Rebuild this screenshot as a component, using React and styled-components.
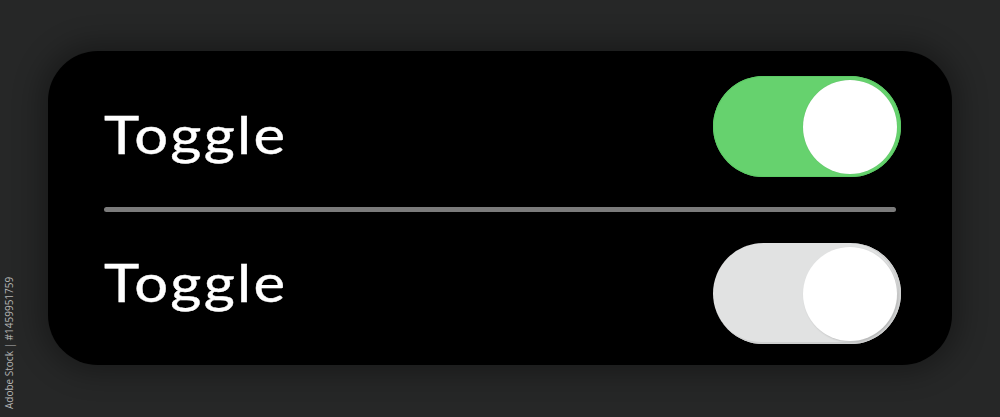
import React from "react";
import styled, { createGlobalStyle } from "styled-components";

const GlobalStyle = createGlobalStyle`
  html, body {
    margin: 0;
    padding: 0;
    background: #262727;
  }
  body {
    font-family: Lato, "Liberation Sans", sans-serif;
  }
`;

const Stage = styled.div`
  position: relative;
  width: 1000px;
  height: 417px;
  box-sizing: border-box;
  padding: 51px 48px 52px 48px;
  background: #262727;
  overflow: hidden;
`;

const Card = styled.section`
  height: 100%;
  box-sizing: border-box;
  padding: 0 51px 0 56px;
  background: #000;
  border-radius: 50px;
  box-shadow: 0 0 28px 8px rgba(0, 0, 0, 0.32);
  display: flex;
  flex-direction: column;
`;

const Row = styled.div`
  height: ${(p) => p.$height}px;
  display: flex;
  justify-content: space-between;
  align-items: flex-start;
`;

const Label = styled.span`
  margin-top: ${(p) => p.$top}px;
  font-family: Lato, "Liberation Sans", sans-serif;
  font-size: 52px;
  line-height: 52px;
  font-weight: 400;
  letter-spacing: 2px;
  color: #fff;
  transform: scaleX(1.15);
  transform-origin: left center;
  -webkit-text-stroke: 0.4px #fff;
`;

const Divider = styled.hr`
  margin: 0 5px 0 0;
  height: 5px;
  border: none;
  border-radius: 3px;
  background: #7b7b7b;
`;

const Track = styled.div`
  margin-top: ${(p) => p.$top}px;
  width: 188px;
  height: 101px;
  box-sizing: border-box;
  border-radius: 51px;
  padding-right: 4px;
  display: flex;
  align-items: center;
  justify-content: flex-end;
  background: ${(p) => (p.$on ? "#66d26e" : "#e1e2e2")};
  box-shadow: ${(p) =>
    p.$on
      ? "inset 0 0 0 1px #5ccb65"
      : "inset -2px -1px 0 1px #cfd0d0"};
`;

const Knob = styled.div`
  width: 94px;
  height: 94px;
  border-radius: 50%;
  background: #fff;
  box-shadow: ${(p) =>
    p.$on ? "0 0 1px rgba(0,0,0,0.15)" : "1px 1px 2px rgba(0,0,0,0.16)"};
`;

const Credit = styled.span`
  position: absolute;
  left: 3px;
  bottom: 8px;
  transform-origin: left bottom;
  transform: translateX(12px) rotate(-90deg);
  font-family: "Open Sans", "Liberation Sans", sans-serif;
  font-size: 10px;
  line-height: 12px;
  white-space: nowrap;
  color: #b4b4b4;
`;

function Toggle({ on, top }) {
  return (
    <Track $on={on} $top={top} role="switch" aria-checked={on}>
      <Knob $on={on} />
    </Track>
  );
}

export default function App() {
  return (
    <>
      <GlobalStyle />
      <Stage>
        <Card>
          <Row $height={156}>
            <Label $top={57}>Toggle</Label>
            <Toggle on top={25} />
          </Row>
          <Divider />
          <Row $height={153}>
            <Label $top={44}>Toggle</Label>
            <Toggle on={false} top={31} />
          </Row>
        </Card>
        <Credit>Adobe Stock | #1459951759</Credit>
      </Stage>
    </>
  );
}
